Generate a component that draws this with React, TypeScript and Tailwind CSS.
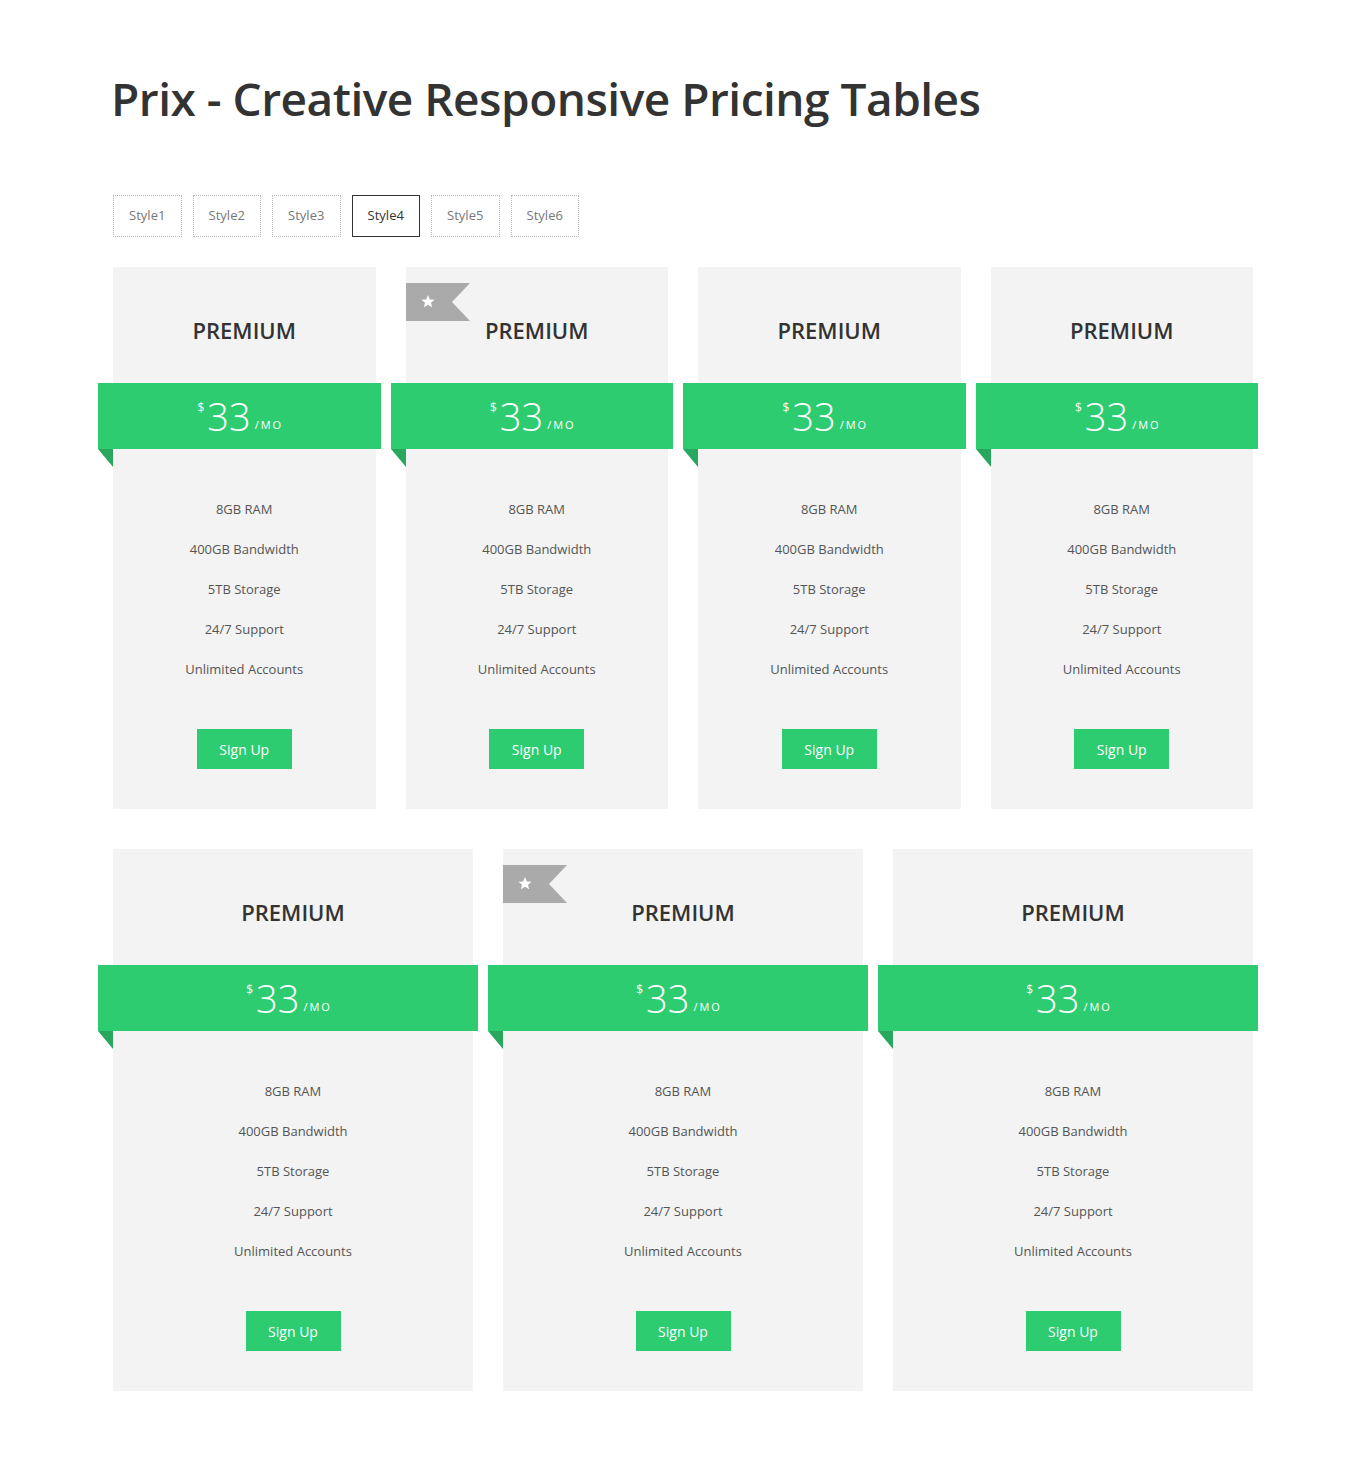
import React from "react";

const features = [
  "8GB RAM",
  "400GB Bandwidth",
  "5TB Storage",
  "24/7 Support",
  "Unlimited Accounts",
];

const styles = ["Style1", "Style2", "Style3", "Style4", "Style5", "Style6"];

function Ribbon() {
  return (
    <div className="absolute left-0 top-4">
      <svg width="64" height="38" viewBox="0 0 64 38">
        <polygon points="0,0 64,0 46,19 64,38 0,38" fill="#aaaaaa" />
        <polygon
          points="22,12 23.9,16.4 28.5,16.7 25,19.7 26.1,24.2 22,21.8 17.9,24.2 19,19.7 15.5,16.7 20.1,16.4"
          fill="#ffffff"
        />
      </svg>
    </div>
  );
}

function PriceCard({ featured }: { featured?: boolean }) {
  return (
    <div className="relative flex h-[542px] flex-col items-center bg-[#f3f3f3]">
      {featured && <Ribbon />}
      <h3 className="mt-[49px] h-[28px] text-[22px] leading-[28px] font-semibold text-[#333]">
        PREMIUM
      </h3>

      {/* price band */}
      <div className="relative mt-[39px] -ml-[15px] -mr-[5px] flex h-[66px] w-[calc(100%+20px)] items-center justify-center bg-[#2ecc71] text-white">
        <div className="flex items-start pl-[2px]">
          <span className="mt-[6px] mr-[3px] text-[12px] leading-none">$</span>
          <span className="text-[38px] leading-[40px] font-light">33</span>
          <span className="mt-[23px] ml-[4px] text-[11px] leading-none tracking-[2px]">
            /MO
          </span>
        </div>
        <div className="absolute left-0 top-full">
          <svg width="15" height="18" viewBox="0 0 15 18">
            <polygon points="0,0 15,0 15,18" fill="#27a85e" />
          </svg>
        </div>
      </div>

      <ul className="mt-[40px] flex flex-col items-center text-[13px] text-[#555]">
        {features.map((f) => (
          <li key={f} className="h-[40px] leading-[40px]">
            {f}
          </li>
        ))}
      </ul>

      <button className="mt-[40px] h-[40px] w-[95px] bg-[#2ecc71] text-[14px] text-white">
        Sign Up
      </button>
    </div>
  );
}

export default function App() {
  return (
    <div
      className="min-h-[1481px] bg-white"
      style={{ fontFamily: "'Open Sans', 'Noto Sans', sans-serif" }}
    >
      <div className="mx-auto w-[1140px] pt-[66px] pb-[90px]">
        <h1 className="-ml-[2px] text-[46px] leading-[64px] font-semibold text-[#333] tracking-[-0.5px]">
          Prix - Creative Responsive Pricing Tables
        </h1>

        <div className="mt-[65px] flex gap-[11px]">
          {styles.map((s) => (
            <button
              key={s}
              className={
                s === "Style4"
                  ? "h-[42px] w-[68.5px] border border-[#333] text-[13px] text-[#333]"
                  : "h-[42px] w-[68.5px] border border-dotted border-[#bbb] text-[13px] text-[#777]"
              }
            >
              {s}
            </button>
          ))}
        </div>

        <div className="mt-[30px] grid grid-cols-4 gap-[30px]">
          <PriceCard />
          <PriceCard featured />
          <PriceCard />
          <PriceCard />
        </div>

        <div className="mt-[40px] grid grid-cols-3 gap-[30px]">
          <PriceCard />
          <PriceCard featured />
          <PriceCard />
        </div>
      </div>
    </div>
  );
}
